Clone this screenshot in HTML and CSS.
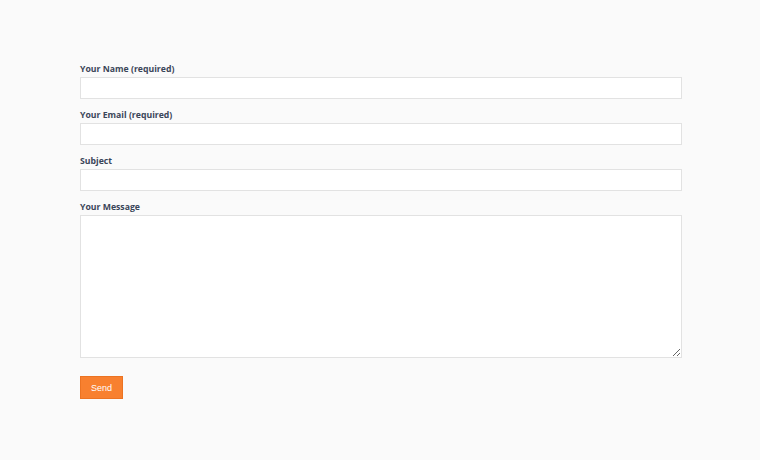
FILE: index.html
```html
<!DOCTYPE html>
<html lang="en">
<head>
<meta charset="utf-8">
<title>Contact</title>
<link rel="stylesheet" href="styles.css">
</head>
<body>
<form class="contact-form">
  <div class="field">
    <label class="field-label" for="name">Your Name (required)</label>
    <input class="field-input" id="name" type="text">
  </div>
  <div class="field">
    <label class="field-label" for="email">Your Email (required)</label>
    <input class="field-input" id="email" type="email">
  </div>
  <div class="field">
    <label class="field-label" for="subject">Subject</label>
    <input class="field-input" id="subject" type="text">
  </div>
  <div class="field">
    <label class="field-label" for="message">Your Message</label>
    <textarea class="field-textarea" id="message"></textarea>
  </div>
  <button class="send-button" type="button">Send</button>
</form>
</body>
</html>
```
FILE: styles.css
```css
html, body {
  margin: 0;
  padding: 0;
  background: #fafafa;
}
body {
  font-family: "Open Sans", "Liberation Sans", sans-serif;
}
.contact-form {
  padding: 63px 78px 0 80px;
  display: flex;
  flex-direction: column;
}
.field {
  display: flex;
  flex-direction: column;
  margin-bottom: 10px;
}
.field-label {
  font-size: 8.7px;
  font-weight: 700;
  line-height: 13px;
  color: #3a4659;
  margin-bottom: 1px;
}
.field-input,
.field-textarea {
  box-sizing: border-box;
  width: 602px;
  height: 22px;
  margin: 0;
  border: 1px solid #e2e2e2;
  background: #ffffff;
  font-family: inherit;
  font-size: 10px;
  outline: none;
}
.field-textarea {
  height: 143px;
  resize: vertical;
  display: block;
}
.send-button {
  box-sizing: border-box;
  margin-top: 8px;
  width: 43px;
  height: 23px;
  padding: 0;
  background: #f8802f;
  border: 1px solid #ec7322;
  color: #ffffff;
  font-family: "Liberation Sans", Arial, sans-serif;
  font-size: 9px;
  cursor: pointer;
}
```
